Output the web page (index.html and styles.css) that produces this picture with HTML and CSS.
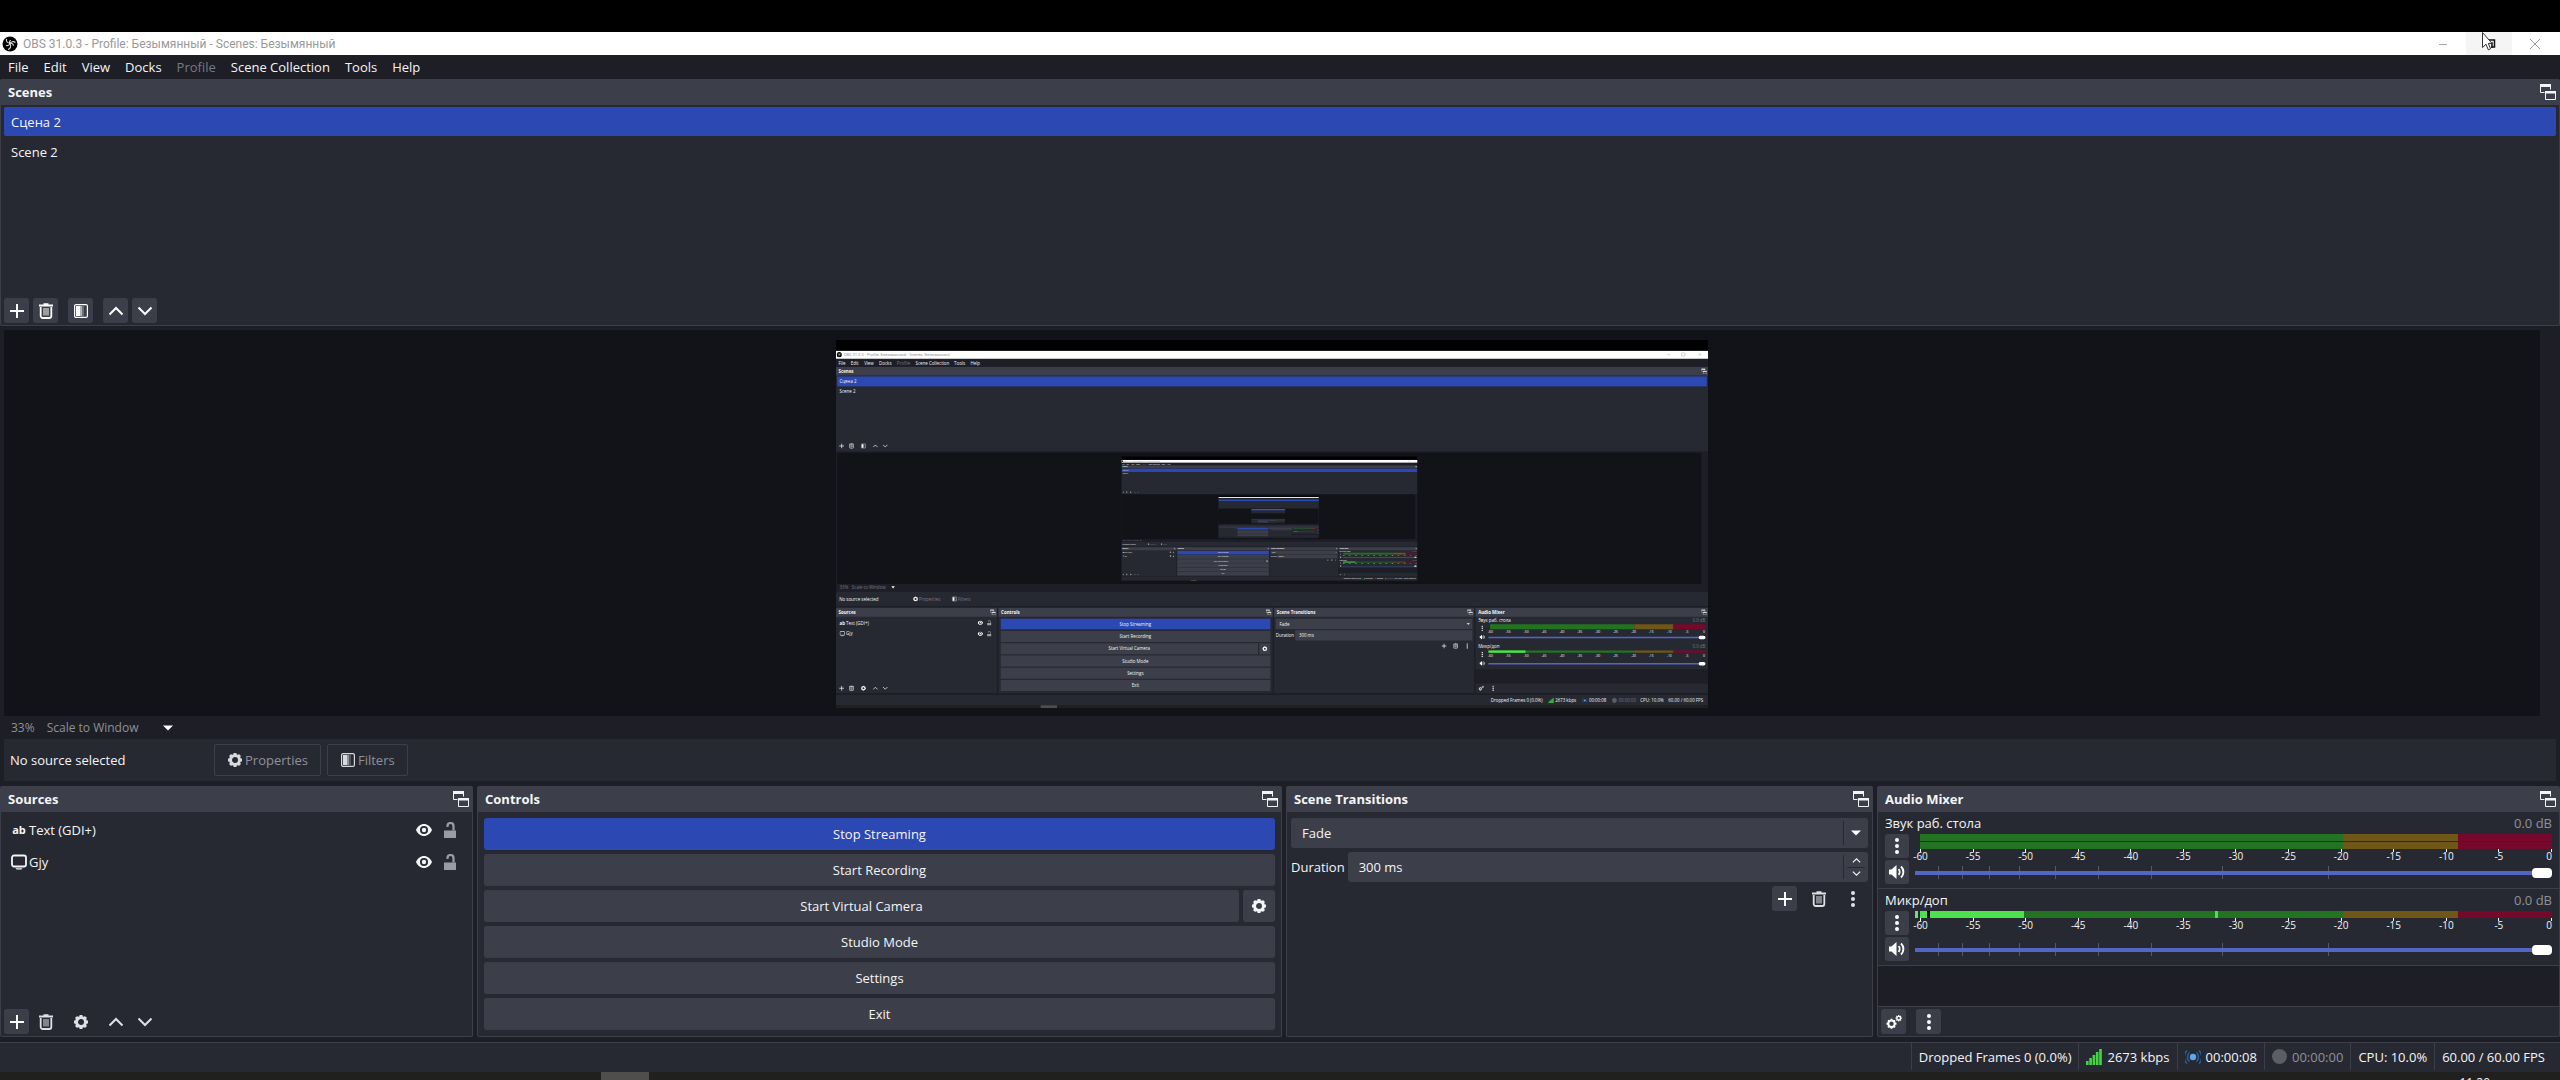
FILE: index.html
```html
<!DOCTYPE html>
<html lang="en">
<head>
    <meta charset="UTF-8">
    <meta name="viewport" content="width=device-width, initial-scale=1.0">
    <title>OBS 31.0.3 - Profile: Безымянный - Scenes: Безымянный</title>
    <link rel="stylesheet" href="styles.css">
</head>
<body>

    <!-- Icons -->
    <svg class="defs" width="0" height="0" aria-hidden="true">
        <symbol id="i-plus" viewBox="0 0 16 16"><path d="M8 1v14M1 8h14" fill="none" stroke="currentColor" stroke-width="2"/></symbol>
        <symbol id="i-trash" viewBox="0 0 16 16"><path d="M1 2.5h14M5.5 1.2h5" fill="none" stroke="currentColor" stroke-width="2"/><path d="M2.7 4v9a2 2 0 0 0 2 2h6.6a2 2 0 0 0 2-2V4" fill="none" stroke="currentColor" stroke-width="1.8"/><path d="M6 5v7.5M8 5v7.5M10 5v7.5" stroke="currentColor" stroke-width="1"/></symbol>
        <symbol id="i-filter" viewBox="0 0 16 16"><rect x="1.6" y="1.6" width="12.8" height="12.8" rx="1.5" fill="none" stroke="currentColor" stroke-width="1.2"/><path d="M3 3h4v10H3z" fill="currentColor"/><path d="M7 3h2v10H7z" fill="currentColor" opacity=".6"/><path d="M9 3h2v10H9z" fill="currentColor" opacity=".25"/></symbol>
        <symbol id="i-up" viewBox="0 0 16 16"><path d="M1.5 11.5 8 5l6.5 6.5" fill="none" stroke="currentColor" stroke-width="2"/></symbol>
        <symbol id="i-down" viewBox="0 0 16 16"><path d="M1.5 4.5 8 11l6.5-6.5" fill="none" stroke="currentColor" stroke-width="2"/></symbol>
        <symbol id="i-gear" viewBox="0 0 16 16"><circle cx="8" cy="8" r="4.5" fill="none" stroke="currentColor" stroke-width="3"/><path d="M8 1v2.5M8 12.5V15M1 8h2.5M12.5 8H15M3.05 3.05l1.8 1.8M11.15 11.15l1.8 1.8M3.05 12.95l1.8-1.8M11.15 4.85l1.8-1.8" stroke="currentColor" stroke-width="3"/></symbol>
        <symbol id="i-gears" viewBox="0 0 16 16"><g fill="none" stroke="currentColor"><circle cx="5.5" cy="9.8" r="3.2" stroke-width="2"/><path d="M5.5 4.8v2M5.5 12.8v2M.5 9.8h2M8.5 9.8h2M2 6.3l1.4 1.4M7.6 11.9 9 13.3M2 13.3l1.4-1.4M7.6 7.7 9 6.3" stroke-width="1.9"/><circle cx="12.7" cy="4.2" r="1.8" stroke-width="1.3"/><path d="M12.7 1v1.4M12.7 6v1.4M9.5 4.2h1.4M14.5 4.2h1.4M10.4 1.9l1 1M14 5.5l1 1M10.4 6.5l1-1M14 2.9l1-1" stroke-width="1.2"/></g></symbol>
        <symbol id="i-popout" viewBox="0 0 16 16"><g fill="none" stroke="currentColor" stroke-width="1"><path d="M4.5 8.5h-4v-8h10v5"/><path d="M5.5 7.5h10v8h-10z"/></g><path d="M0 0h11v3H0zM5 7h11v2.5H5z" fill="currentColor"/></symbol>
        <symbol id="i-dots" viewBox="0 0 16 16"><circle cx="8" cy="2" r="2" fill="currentColor"/><circle cx="8" cy="8" r="2" fill="currentColor"/><circle cx="8" cy="14" r="2" fill="currentColor"/></symbol>
        <symbol id="i-speaker" viewBox="0 0 16 16"><path d="M0 5.5h2.5L7.5 1v14L2.500 10.5H0z" fill="currentColor"/><path d="M9.500 5.2a4 4 0 0 1 0 5.6M12 2.5a7.5 7.5 0 0 1 0 11" fill="none" stroke="currentColor" stroke-width="1.9"/></symbol>
        <symbol id="i-eye" viewBox="0 0 16 16"><path fill-rule="evenodd" d="M8 2C4.500 2 1.500 4.500 0 8c1.500 3.500 4.500 6 8 6s6.500-2.500 8-6c-1.500-3.500-4.500-6-8-6zm0 10a4 4 0 1 1 0-8 4 4 0 0 1 0 8z" fill="currentColor"/><circle cx="8" cy="8" r="2.2" fill="currentColor"/></symbol>
        <symbol id="i-lock" viewBox="0 0 16 16"><path d="M2 8.5h12V16H2z" fill="currentColor"/><path d="M11.5 8.5V4a3 3 0 0 0-6 0v1" fill="none" stroke="currentColor" stroke-width="2.2"/></symbol>
        <symbol id="i-monitor" viewBox="0 0 16 16"><rect x="1" y="1.5" width="14" height="11" rx="2" fill="none" stroke="currentColor" stroke-width="1.8"/><path d="M4.5 14.2h7l-1 1.3h-5z" fill="currentColor"/></symbol>
        <symbol id="i-arrow" viewBox="0 0 10 6"><path d="M0 .5h10L5 5.500z" fill="currentColor"/></symbol>
        <symbol id="i-signal" viewBox="0 0 16 16"><path d="M0 12h2.6v4H0zM3.3 9h2.6v7H3.300zM6.600 6h2.600v10H6.600zM9.900 3h2.600v13H9.900zM13.200 0h2.600v16h-2.600z" fill="#43d643"/></symbol>
        <symbol id="i-live" viewBox="0 0 16 16"><circle cx="8" cy="8" r="3.2" fill="#5aa8f0"/><path d="M4.5 3.5a6 6 0 0 0 0 9M11.5 3.5a6 6 0 0 1 0 9M2 1.5a9 9 0 0 0 0 13M14 1.5a9 9 0 0 1 0 13" fill="none" stroke="#2a5f9c" stroke-width="1.500"/></symbol>
        <symbol id="i-obs" viewBox="0 0 16 16"><circle cx="8" cy="8" r="7.5" fill="#000"/><g fill="none" stroke="#ddd" stroke-width="1.1"><path d="M4.5 2.8C4 5.5 5.5 7.2 8 7.3c2-.2 3.3.6 3.5 2.5"/><path d="M13.5 6.5c-2-1.5-4.4-.9-5.5 1-.8 1.8-2.2 2.6-3.9 1.8"/><path d="M6 13.5c2.3-.8 3.3-3 2.2-5.2-1-1.5-1-3 .5-4.2"/></g></symbol>

        <symbol id="fader-ticks" viewBox="0 0 637 13" preserveAspectRatio="none"><path d="M23.5 0v13M47.5 0v13M74.5 0v13M104.5 0v13M140.500 0v13M183.500 0v13M236.500 0v13M307.500 0v13M413.500 0v13" stroke="#555966"/></symbol>

        <!-- One captured desktop, used at every depth of the preview -->
        <symbol id="desk" viewBox="0 0 2560 1080">
            <rect width="2560" height="1080" fill="#1d1e26"/>
            <rect width="2560" height="32" fill="#000"/>
            <rect y="32" width="2560" height="23" fill="#fff"/>
            <use href="#i-obs" x="2" y="35" width="16" height="16"/>
            <path d="M2440 43h8M2482 38h10v9h-10zM2531 38l9 9M2540 38l-9 9" fill="none" stroke="#888"/>
            <rect y="79" width="2560" height="26" fill="#3c3f4a"/>
            <rect y="105" width="2560" height="222" fill="#272932"/>
            <rect x="4" y="107" width="2552" height="29" fill="#2c48b2"/>
            <rect x="4" y="331" width="2536" height="385" fill="#121318"/>
            <rect y="739" width="2560" height="42" fill="#272932"/>
            <path d="M0 786h473v251H0zM477 786h805v251H477zM1286 786h587v251h-587zM1877 786h683v180h-683zM1877 1008h683v29h-683zM0 1042h2560v30H0z" fill="#272932"/>
            <path d="M0 786h473v26H0zM477 786h805v26H477zM1286 786h587v26h-587zM1877 786h683v26h-683z" fill="#3c3f4a"/>
            <rect x="484" y="818" width="791" height="31" fill="#2c48b2"/>
            <path d="M484 854h791v32H484zM484 890h755v32H484zM1243 890h32v32h-32zM484 926h791v32H484zM484 962h791v32H484zM484 998h791v32H484zM1291 818h577v30h-577zM1348 852h520v30h-520z" fill="#3c3f4a"/>
            <rect y="1072" width="2560" height="8" fill="#20201f"/>
            <rect x="601" y="1072" width="48" height="8" fill="#4f4e4c"/>
            <path d="M1920 834h423v15h-423zM1920 911h423v7h-423z" fill="#227322"/>
            <path d="M2343 834h115v15h-115zM2343 911h115v7h-115z" fill="#6f5817"/>
            <path d="M2458 834h94v15h-94zM2458 911h94v7h-94z" fill="#76082b"/>
            <rect x="1915" y="911" width="109" height="7" fill="#4ce24c"/>
            <path d="M1915 871h617v4h-617zM1915 948h617v4h-617z" fill="#5267c4"/>
            <rect x="2532" y="868" width="20" height="10" rx="5" fill="#fff"/>
            <rect x="2532" y="945" width="20" height="10" rx="5" fill="#fff"/>
            <path d="M163 723h10l-5 6zM1851 831h10l-5 5z" fill="#fff"/>
            <g color="#fff">
                <use href="#i-plus" x="9" y="303" width="16" height="16"/>
                <use href="#i-trash" x="38" y="303" width="16" height="16"/>
                <use href="#i-filter" x="73" y="303" width="16" height="16"/>
                <use href="#i-up" x="108" y="303" width="16" height="16"/>
                <use href="#i-down" x="137" y="303" width="16" height="16"/>
                <use href="#i-plus" x="9" y="1014" width="16" height="16"/>
                <use href="#i-trash" x="38" y="1014" width="16" height="16"/>
                <use href="#i-gear" x="73" y="1014" width="16" height="16"/>
                <use href="#i-up" x="108" y="1014" width="16" height="16"/>
                <use href="#i-down" x="137" y="1014" width="16" height="16"/>
                <use href="#i-popout" x="2540" y="84" width="16" height="16"/>
                <use href="#i-popout" x="453" y="791" width="16" height="16"/>
                <use href="#i-popout" x="1262" y="791" width="16" height="16"/>
                <use href="#i-popout" x="1853" y="791" width="16" height="16"/>
                <use href="#i-popout" x="2540" y="791" width="16" height="16"/>
                <use href="#i-gear" x="226" y="752" width="16" height="16"/>
                <use href="#i-filter" x="340" y="752" width="16" height="16"/>
                <use href="#i-eye" x="416" y="822" width="16" height="16"/>
                <use href="#i-eye" x="416" y="854" width="16" height="16"/>
                <use href="#i-lock" x="442" y="822" width="16" height="16" color="#9a9ca5"/>
                <use href="#i-lock" x="442" y="854" width="16" height="16" color="#9a9ca5"/>
                <use href="#i-monitor" x="11" y="854" width="16" height="16"/>
                <use href="#i-gear" x="1251" y="898" width="16" height="16"/>
                <use href="#i-plus" x="1777" y="890" width="16" height="16"/>
                <use href="#i-trash" x="1811" y="890" width="16" height="16"/>
                <use href="#i-dots" x="1845" y="890" width="16" height="16"/>
                <use href="#i-dots" x="1889" y="838" width="16" height="16"/>
                <use href="#i-speaker" x="1889" y="864" width="16" height="16"/>
                <use href="#i-dots" x="1889" y="915" width="16" height="16"/>
                <use href="#i-speaker" x="1889" y="941" width="16" height="16"/>
                <use href="#i-gears" x="1886" y="1014" width="16" height="16"/>
                <use href="#i-dots" x="1921" y="1014" width="16" height="16"/>
                <use href="#i-signal" x="2091" y="1050" width="16" height="16"/>
                <use href="#i-live" x="2190" y="1050" width="16" height="16"/>
                <circle cx="2285" cy="1058" r="7" fill="#5c5e66"/>
            </g>
        </symbol>
    </svg>

    <div class="offscreen"></div>

    <header class="titlebar">
        <svg class="icon"><use href="#i-obs"/></svg>
        <span class="titlebar-text">OBS 31.0.3 - Profile: Безымянный - Scenes: Безымянный</span>
        <button class="win-btn" type="button" aria-label="Minimize"><svg width="10" height="10"><path d="M1 5.5h8" stroke="#aaa"/></svg></button>
        <button class="win-btn win-btn-hover" type="button" aria-label="Restore">
            <svg width="14" height="10"><path d="M6 1h6.500v7H9M7 4h3v5" fill="none" stroke="#111" stroke-width="1.500"/></svg>
            <svg class="cursor" width="13" height="19"><path d="M.5 .5v15l3.500-3.300 2.300 5.600 2.300-1-2.300-5.400h3.700z" fill="#fff" stroke="#333"/></svg>
        </button>
        <button class="win-btn" type="button" aria-label="Close"><svg width="12" height="12"><path d="M1 1l10 10M11 1 1 11" stroke="#999"/></svg></button>
    </header>

    <nav class="menubar">
        <a href="#">File</a>
        <a href="#">Edit</a>
        <a href="#">View</a>
        <a href="#">Docks</a>
        <a href="#" class="disabled">Profile</a>
        <a href="#">Scene Collection</a>
        <a href="#">Tools</a>
        <a href="#">Help</a>
    </nav>

    <section class="dock scenes">
        <div class="dock-header"><h2>Scenes</h2><button type="button" class="popout" aria-label="Undock scenes"><svg class="icon"><use href="#i-popout"/></svg></button></div>
        <ul class="scene-list">
            <li class="selected">Сцена 2</li>
            <li>Scene 2</li>
        </ul>
        <div class="toolbar">
            <button type="button" class="tool filled" aria-label="Add scene"><svg class="icon"><use href="#i-plus"/></svg></button>
            <button type="button" class="tool filled" aria-label="Remove scene"><svg class="icon"><use href="#i-trash"/></svg></button>
            <span class="tool-sep"></span>
            <button type="button" class="tool filled" aria-label="Scene filters"><svg class="icon"><use href="#i-filter"/></svg></button>
            <span class="tool-sep"></span>
            <button type="button" class="tool filled" aria-label="Move scene up"><svg class="icon"><use href="#i-up"/></svg></button>
            <button type="button" class="tool filled" aria-label="Move scene down"><svg class="icon"><use href="#i-down"/></svg></button>
        </div>
    </section>

    <main class="preview">
        <div class="canvas">
            <svg viewBox="0 0 2560 1080" role="img" aria-label="Preview">
                <use href="#desk" width="2560" height="1080"/>
                <g id="desk-labels" class="desk-text">
                    <text class="desk-title" x="23" y="48">OBS 31.0.3 - Profile: Безымянный - Scenes: Безымянный</text>
                    <text x="8" y="72">File</text><text x="44" y="72">Edit</text><text x="83" y="72">View</text><text x="127" y="72">Docks</text>
                    <text class="dim" x="179" y="72">Profile</text><text x="234" y="72">Scene Collection</text><text x="347" y="72">Tools</text><text x="395" y="72">Help</text>
                    <text x="8" y="97" font-weight="700">Scenes</text>
                    <text x="11" y="127">Сцена 2</text><text x="11" y="157">Scene 2</text>
                    <text class="dim" x="11" y="732">33%</text><text class="dim" x="47" y="732">Scale to Window</text>
                    <text x="10" y="765">No source selected</text>
                    <text class="dim" x="244" y="765">Properties</text><text class="dim" x="358" y="765">Filters</text>
                    <g font-weight="700"><text x="8" y="804">Sources</text><text x="485" y="804">Controls</text><text x="1294" y="804">Scene Transitions</text><text x="1885" y="804">Audio Mixer</text><text x="11" y="835">ab</text></g>
                    <text x="30" y="835">Text (GDI+)</text><text x="30" y="867">Gjy</text>
                    <g text-anchor="middle"><text x="879" y="839">Stop Streaming</text><text x="879" y="875">Start Recording</text><text x="861" y="911">Start Virtual Camera</text><text x="879" y="947">Studio Mode</text><text x="879" y="983">Settings</text><text x="879" y="1019">Exit</text></g>
                    <text x="1302" y="838">Fade</text><text x="1291" y="872">Duration</text><text x="1359" y="872">300 ms</text>
                    <text x="1885" y="828">Звук раб. стола</text><text x="1885" y="905">Микр/доп</text>
                    <g text-anchor="end"><text class="dim" x="2552" y="828">0.0 dB</text><text class="dim" x="2552" y="905">0.0 dB</text></g>
                    <g class="desk-scale" text-anchor="middle">
                        <text x="1921" y="860">-60</text><text x="1973" y="860">-55</text><text x="2026" y="860">-50</text><text x="2078" y="860">-45</text><text x="2131" y="860">-40</text><text x="2183" y="860">-35</text><text x="2236" y="860">-30</text><text x="2288" y="860">-25</text><text x="2341" y="860">-20</text><text x="2393" y="860">-15</text><text x="2446" y="860">-10</text><text x="2498" y="860">-5</text><text x="2548" y="860">0</text>
                        <text x="1921" y="929">-60</text><text x="1973" y="929">-55</text><text x="2026" y="929">-50</text><text x="2078" y="929">-45</text><text x="2131" y="929">-40</text><text x="2183" y="929">-35</text><text x="2236" y="929">-30</text><text x="2288" y="929">-25</text><text x="2341" y="929">-20</text><text x="2393" y="929">-15</text><text x="2446" y="929">-10</text><text x="2498" y="929">-5</text><text x="2548" y="929">0</text>
                    </g>
                    <text x="1922" y="1063">Dropped Frames 0 (0.0%)</text><text x="2111" y="1063">2673 kbps</text><text x="2210" y="1063">00:00:08</text>
                    <text class="dim" x="2297" y="1063">00:00:00</text><text x="2361" y="1063">CPU: 10.0%</text><text x="2443" y="1063">60.00 / 60.00 FPS</text>
                </g>
                <svg x="838" y="341" width="869" height="367" viewBox="0 0 2560 1080">
                    <use href="#desk" width="2560" height="1080"/>
                    <use href="#desk-labels"/>
                    <svg x="838" y="341" width="869" height="367" viewBox="0 0 2560 1080">
                        <use href="#desk" width="2560" height="1080"/>
                        <svg x="838" y="341" width="869" height="367" viewBox="0 0 2560 1080">
                            <use href="#desk" width="2560" height="1080"/>
                        </svg>
                    </svg>
                </svg>
            </svg>
        </div>
    </main>

    <div class="zoombar">
        <span class="zoom-value">33%</span>
        <div class="select-wrap zoom-select">
            <select aria-label="Preview scale"><option>Scale to Window</option></select>
            <svg class="arrow"><use href="#i-arrow"/></svg>
        </div>
    </div>

    <div class="contextbar">
        <span class="context-name">No source selected</span>
        <button type="button" class="ghost" disabled><svg class="icon"><use href="#i-gear"/></svg>Properties</button>
        <button type="button" class="ghost" disabled><svg class="icon"><use href="#i-filter"/></svg>Filters</button>
    </div>

    <div class="docks">
        <section class="dock">
            <div class="dock-header"><h2>Sources</h2><button type="button" class="popout" aria-label="Undock sources"><svg class="icon"><use href="#i-popout"/></svg></button></div>
            <ul class="source-list">
                <li>
                    <b class="source-ab" aria-hidden="true">ab</b>
                    <span class="source-name">Text (GDI+)</span>
                    <button type="button" aria-label="Hide Text (GDI+)"><svg class="icon"><use href="#i-eye"/></svg></button>
                    <button type="button" class="lock" aria-label="Lock Text (GDI+)"><svg class="icon"><use href="#i-lock"/></svg></button>
                </li>
                <li>
                    <svg class="icon"><use href="#i-monitor"/></svg>
                    <span class="source-name">Gjy</span>
                    <button type="button" aria-label="Hide Gjy"><svg class="icon"><use href="#i-eye"/></svg></button>
                    <button type="button" class="lock" aria-label="Lock Gjy"><svg class="icon"><use href="#i-lock"/></svg></button>
                </li>
            </ul>
            <div class="toolbar">
                <button type="button" class="tool filled" aria-label="Add source"><svg class="icon"><use href="#i-plus"/></svg></button>
                <button type="button" class="tool" aria-label="Remove source"><svg class="icon"><use href="#i-trash"/></svg></button>
                <span class="tool-sep"></span>
                <button type="button" class="tool" aria-label="Source properties"><svg class="icon"><use href="#i-gear"/></svg></button>
                <span class="tool-sep"></span>
                <button type="button" class="tool" aria-label="Move source up"><svg class="icon"><use href="#i-up"/></svg></button>
                <button type="button" class="tool" aria-label="Move source down"><svg class="icon"><use href="#i-down"/></svg></button>
            </div>
        </section>

        <section class="dock">
            <div class="dock-header"><h2>Controls</h2><button type="button" class="popout" aria-label="Undock controls"><svg class="icon"><use href="#i-popout"/></svg></button></div>
            <div class="controls">
                <button type="button" class="btn btn-active">Stop Streaming</button>
                <button type="button" class="btn">Start Recording</button>
                <div class="btn-row">
                    <button type="button" class="btn">Start Virtual Camera</button>
                    <button type="button" class="btn btn-square" aria-label="Virtual camera settings"><svg class="icon"><use href="#i-gear"/></svg></button>
                </div>
                <button type="button" class="btn">Studio Mode</button>
                <button type="button" class="btn">Settings</button>
                <button type="button" class="btn">Exit</button>
            </div>
        </section>

        <section class="dock">
            <div class="dock-header"><h2>Scene Transitions</h2><button type="button" class="popout" aria-label="Undock transitions"><svg class="icon"><use href="#i-popout"/></svg></button></div>
            <div class="transitions">
                <div class="select-wrap field">
                    <select aria-label="Transition"><option>Fade</option></select>
                    <span class="field-end"><svg class="arrow"><use href="#i-arrow"/></svg></span>
                </div>
                <div class="duration">
                    <label for="duration">Duration</label>
                    <div class="field">
                        <input type="text" id="duration" value="300 ms">
                        <span class="field-end spin">
                            <button type="button" aria-label="Increase"><svg><use href="#i-up"/></svg></button>
                            <button type="button" aria-label="Decrease"><svg><use href="#i-down"/></svg></button>
                        </span>
                    </div>
                </div>
                <div class="transition-tools">
                    <button type="button" class="tool filled" aria-label="Add transition"><svg class="icon"><use href="#i-plus"/></svg></button>
                    <button type="button" class="tool" aria-label="Remove transition"><svg class="icon"><use href="#i-trash"/></svg></button>
                    <button type="button" class="tool" aria-label="Transition menu"><svg class="icon"><use href="#i-dots"/></svg></button>
                </div>
            </div>
        </section>

        <section class="dock">
            <div class="dock-header"><h2>Audio Mixer</h2><button type="button" class="popout" aria-label="Undock mixer"><svg class="icon"><use href="#i-popout"/></svg></button></div>

            <div class="strip">
                <div class="strip-head"><label for="desktop">Звук раб. стола</label><span class="db">0.0 dB</span></div>
                <div class="strip-buttons">
                    <button type="button" class="tool filled" aria-label="Audio menu"><svg class="icon"><use href="#i-dots"/></svg></button>
                    <button type="button" class="tool filled" aria-label="Mute"><svg class="icon"><use href="#i-speaker"/></svg></button>
                </div>
                <div class="strip-body">
                    <div class="meter"></div>
                    <div class="meter"></div>
                    <div class="scale"><span>-60</span><span>-55</span><span>-50</span><span>-45</span><span>-40</span><span>-35</span><span>-30</span><span>-25</span><span>-20</span><span>-15</span><span>-10</span><span>-5</span><span>0</span></div>
                    <div class="fader">
                        <svg><use href="#fader-ticks"/></svg>
                        <input type="range" id="desktop" min="0" max="100" value="100">
                    </div>
                </div>
            </div>

            <div class="strip">
                <div class="strip-head"><label for="mic">Микр/доп</label><span class="db">0.0 dB</span></div>
                <div class="strip-buttons">
                    <button type="button" class="tool filled" aria-label="Audio menu"><svg class="icon"><use href="#i-dots"/></svg></button>
                    <button type="button" class="tool filled" aria-label="Mute"><svg class="icon"><use href="#i-speaker"/></svg></button>
                </div>
                <div class="strip-body">
                    <div class="meter">
                        <span class="input-level"></span>
                        <span class="level" style="width: 16.5%"></span>
                        <span class="magnitude"></span>
                        <span class="peak" style="left: 46.6%"></span>
                    </div>
                    <div class="scale"><span>-60</span><span>-55</span><span>-50</span><span>-45</span><span>-40</span><span>-35</span><span>-30</span><span>-25</span><span>-20</span><span>-15</span><span>-10</span><span>-5</span><span>0</span></div>
                    <div class="fader">
                        <svg><use href="#fader-ticks"/></svg>
                        <input type="range" id="mic" min="0" max="100" value="100">
                    </div>
                </div>
            </div>

            <div class="mixer-space"></div>
            <div class="toolbar mixer-tools">
                <button type="button" class="tool filled" aria-label="Advanced audio properties"><svg class="icon"><use href="#i-gears"/></svg></button>
                <span class="tool-sep"></span>
                <button type="button" class="tool filled" aria-label="Mixer menu"><svg class="icon"><use href="#i-dots"/></svg></button>
            </div>
        </section>
    </div>

    <footer class="statusbar">
        <span>Dropped Frames 0 (0.0%)</span>
        <span><svg class="icon"><use href="#i-signal"/></svg>2673 kbps</span>
        <span><svg class="icon"><use href="#i-live"/></svg>00:00:08</span>
        <span class="idle"><i class="rec-dot"></i>00:00:00</span>
        <span>CPU: 10.0%</span>
        <span>60.00 / 60.00 FPS</span>
    </footer>

    <div class="taskbar">
        <span class="task"></span>
        <span class="clock">11:20</span>
    </div>

</body>
</html>
```
FILE: styles.css
```css
* {
    box-sizing: border-box;
}

body {
    margin: 0;
    height: 100vh;
    display: flex;
    flex-direction: column;
    overflow: hidden;
    background-color: #1d1e26;
    color: #f4f5f8;
    font-family: "Open Sans", "Noto Sans", sans-serif;
    font-size: 13px;
    line-height: 18px;
}

button, input, select {
    font: inherit;
    color: inherit;
    background: none;
    border: none;
    padding: 0;
    margin: 0;
}

button {
    display: flex;
    align-items: center;
    justify-content: center;
}

ul {
    list-style: none;
    margin: 0;
    padding: 0;
}

.defs {
    position: absolute;
}

.icon {
    width: 16px;
    height: 16px;
    flex: none;
}

.offscreen {
    height: 32px;
    flex: none;
    background-color: #000;
}

/* Title bar */
.titlebar {
    height: 23px;
    flex: none;
    display: flex;
    align-items: center;
    padding: 0 2px;
    background-color: #fff;
    color: #999;
    font-family: Roboto, "Open Sans", sans-serif;
    font-size: 12px;
}

.titlebar-text {
    flex: 1;
    padding-left: 5px;
}

.win-btn {
    position: relative;
    width: 46px;
    height: 23px;
}

.win-btn-hover {
    background-color: #f5f5f5;
}

.cursor {
    position: absolute;
    left: 16px;
    top: 0;
}

.menubar {
    height: 24px;
    flex: none;
    display: flex;
    align-items: center;
    gap: 15px;
    padding: 0 8px;
}

.menubar a {
    color: inherit;
    text-decoration: none;
}

.menubar .disabled {
    color: #777983;
}

/* Docks */
.dock {
    display: flex;
    flex-direction: column;
    min-width: 0;
    background-color: #272932;
    border: 1px solid #3c3f4a;
    border-top: none;
    border-radius: 2px;
}

.dock-header {
    height: 26px;
    flex: none;
    display: flex;
    align-items: center;
    justify-content: space-between;
    padding: 0 3px 0 7px;
    background-color: #3c3f4a;
}

.dock-header h2 {
    margin: 0;
    font-size: 13px;
    font-weight: 700;
}

.scenes {
    flex: none;
}

.scene-list {
    min-height: 193px;
    padding: 2px 3px;
}

.scene-list li {
    height: 29px;
    margin-bottom: 1px;
    padding: 6px 7px;
    border-radius: 2px;
}

.scene-list .selected {
    background-color: #2c48b2;
}

.toolbar {
    display: flex;
    gap: 4px;
    padding: 0 3px 2px;
}

.tool {
    width: 25px;
    height: 25px;
    border-radius: 3px;
    color: #dfe0e6;
}

.tool.filled {
    background-color: #3c3f4a;
    color: #fff;
}

.tool-sep {
    width: 2px;
}

/* Preview */
.preview {
    flex: 1;
    min-height: 0;
    display: flex;
    padding: 4px 20px 0 4px;
}

.canvas {
    flex: 1;
    display: flex;
    padding: 10px 0 8px;
    background-color: #121318;
}

.canvas > svg {
    flex: 1;
    min-width: 0;
    min-height: 0;
}

.desk-text {
    font-size: 13px;
    fill: #f4f5f8;
}

.desk-text .dim {
    fill: #777983;
}

.desk-title {
    font-family: Roboto, "Open Sans", sans-serif;
    font-size: 12px;
    fill: #999;
}

.desk-scale {
    font-size: 10px;
}

.zoombar {
    height: 23px;
    flex: none;
    display: flex;
    align-items: center;
    gap: 12px;
    padding: 0 11px;
    color: #8f9198;
    font-size: 12px;
}

.select-wrap {
    display: flex;
    align-items: center;
}

.select-wrap select {
    flex: 1;
    appearance: none;
}

.arrow {
    width: 10px;
    height: 6px;
    color: #fff;
}

.zoom-select {
    width: 126px;
}

.contextbar {
    flex: none;
    display: flex;
    align-items: center;
    gap: 6px;
    height: 42px;
    margin: 0 4px 5px;
    padding: 0 6px;
    background-color: #272932;
}

.context-name {
    width: 198px;
}

.ghost {
    height: 32px;
    gap: 2px;
    padding: 0 12px;
    border: 1px solid #3c3f4a;
    border-radius: 2px;
    color: #8f9198;
}

.ghost .icon {
    color: #d8d9de;
}

.docks {
    flex: none;
    display: grid;
    grid-template-columns: 473fr 805fr 587fr 683fr;
    gap: 4px;
}

/* Sources */
.source-list {
    flex: 1;
    padding: 2px 14px 0 10px;
}

.source-list li {
    display: flex;
    align-items: center;
    gap: 2px;
    height: 32px;
}

.source-name {
    flex: 1;
}

.source-ab {
    width: 16px;
    font-size: 11px;
    text-align: center;
}

.source-list .lock {
    margin-left: 8px;
    color: #9a9ca5;
}

/* Controls */
.controls {
    display: flex;
    flex-direction: column;
    gap: 4px;
    padding: 6px;
}

.btn-row {
    display: flex;
    gap: 4px;
}

.btn {
    flex: 1;
    height: 32px;
    flex-basis: 32px;
    border-radius: 3px;
    background-color: #3c3f4a;
}

.btn-active {
    background-color: #2c48b2;
}

.btn-square {
    flex: none;
    width: 32px;
}

/* Transitions */
.transitions {
    display: flex;
    flex-direction: column;
    gap: 4px;
    padding: 6px 4px;
}

.field {
    flex: 1;
    display: flex;
    height: 30px;
    border-radius: 3px;
    background-color: #3c3f4a;
}

.transitions > .field {
    flex: none;
}

.field select, .field input {
    flex: 1;
    min-width: 0;
    height: 30px;
    padding: 0 11px;
}

.field-end {
    width: 25px;
    height: 24px;
    margin: 3px 0;
    display: flex;
    align-items: center;
    justify-content: center;
    border-left: 1px solid #272932;
}

.spin {
    flex-direction: column;
}

.spin button {
    flex: 1;
    width: 18px;
}

.spin button + button {
    border-top: 1px solid #272932;
}

.spin svg {
    width: 9px;
    height: 9px;
}

.duration {
    display: flex;
    align-items: center;
    gap: 3px;
}

.transition-tools {
    display: flex;
    justify-content: flex-end;
    gap: 9px;
    padding-right: 3px;
}

/* Mixer */
.strip {
    display: grid;
    grid-template-columns: 24px 1fr;
    column-gap: 6px;
    height: 77px;
    padding: 0 7px;
    grid-template-rows: 22px 1fr;
    border-bottom: 1px solid #3c3f4a;
}

.strip-head {
    grid-column: 1 / 3;
    display: flex;
    justify-content: space-between;
    align-items: center;
}

.db {
    color: #8f9198;
}

.strip-buttons {
    display: flex;
    flex-direction: column;
    gap: 2px;
}

.strip-buttons .tool {
    width: 24px;
    height: 24px;
}

.strip-body {
    display: flex;
    flex-direction: column;
}

.meter {
    position: relative;
    height: 7px;
    margin: 0 0 1px 5px;
    background: linear-gradient(to right, #227322 66.9%, #6f5817 66.9% 85.1%, #76082b 85.1%);
}

.meter + .scale {
    margin-top: -1px;
}

.meter span {
    position: absolute;
    top: 0;
    height: 7px;
}

.level {
    left: 0;
    background-color: #4ce24c;
}

.input-level {
    left: -5px;
    width: 3px;
    background-color: #7fd48a;
}

.magnitude {
    left: 7px;
    width: 3px;
    background-color: #000;
}

.peak {
    width: 3px;
    background-color: #4ce24c;
}

.scale {
    display: flex;
    justify-content: space-between;
    padding-left: 5px;
    height: 16px;
    font-size: 10px;
    line-height: 8px;
}

.scale span {
    width: 1px;
    display: flex;
    flex-direction: column;
    align-items: center;
}

.scale span::before {
    content: "";
    width: 1px;
    height: 3px;
    flex: none;
    background-color: #f4f5f8;
}

.scale span:last-child {
    align-items: flex-end;
}

.fader {
    display: grid;
    height: 13px;
    margin-top: auto;
    margin-bottom: 9px;
}

.fader svg, .fader input {
    grid-area: 1 / 1;
    width: 100%;
    height: 13px;
}

.fader input {
    appearance: none;
}

.fader input::-webkit-slider-runnable-track {
    height: 4px;
    background-color: #5267c4;
}

.fader input::-webkit-slider-thumb {
    appearance: none;
    width: 20px;
    height: 10px;
    margin-top: -3px;
    border-radius: 4px;
    background-color: #fff;
}

.mixer-space {
    flex: 1;
    background-color: #1d1e26;
    border-bottom: 1px solid #3c3f4a;
}

.mixer-tools {
    padding-top: 2px;
}

/* Status bar */
.statusbar {
    flex: none;
    display: flex;
    justify-content: flex-end;
    height: 30px;
    margin-top: 5px;
    padding: 0 8px 2px 0;
    background-color: #272932;
    border-top: 1px solid #3c3f4a;
}

.statusbar span {
    display: flex;
    align-items: center;
    gap: 5px;
    padding: 0 7px;
    border-left: 1px solid #3c3f4a;
}

.statusbar .idle {
    color: #8f9198;
}

.rec-dot {
    width: 15px;
    height: 15px;
    border-radius: 50%;
    background-color: #5c5e66;
}

.taskbar {
    flex: none;
    display: flex;
    justify-content: space-between;
    height: 8px;
    padding: 0 70px 0 601px;
    overflow: hidden;
    background-color: #20201f;
}

.task {
    width: 48px;
    background-color: #4f4e4c;
}

.clock {
    padding-top: 2px;
    font-size: 12px;
}
```
